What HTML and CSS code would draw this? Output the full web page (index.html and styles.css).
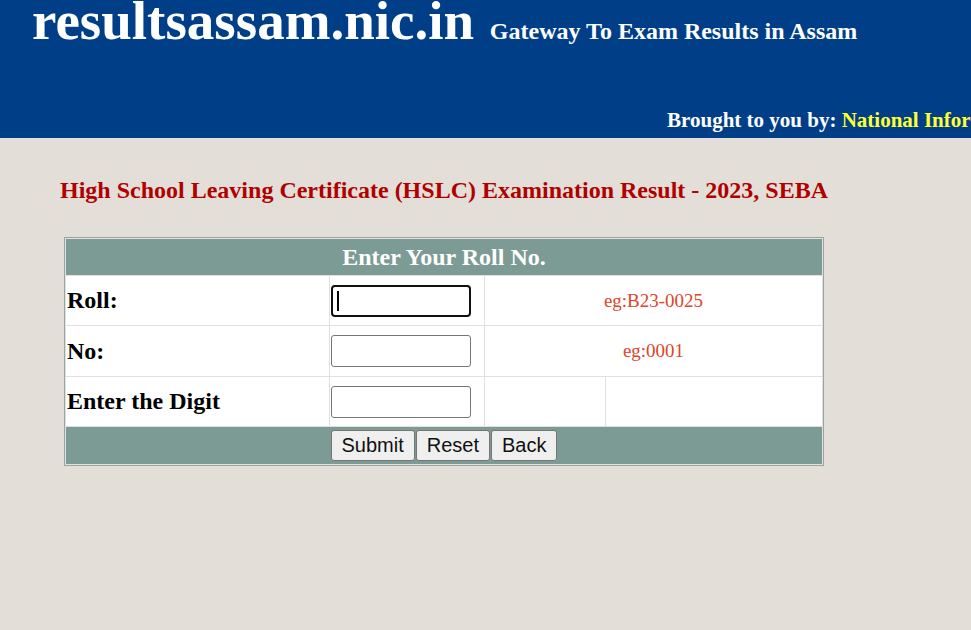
FILE: index.html
```html
<!DOCTYPE html>
<html lang="en">
<head>
<meta charset="utf-8">
<title>resultsassam.nic.in</title>
<link rel="stylesheet" href="styles.css">
</head>
<body>
<header class="site-header">
  <div class="brand-line"><span class="brand">resultsassam.nic.in </span><span class="tagline">Gateway To Exam Results in Assam</span></div>
  <div class="credit-line">Brought to you by: <span class="credit-org">National Informatics Centre, Assam</span></div>
</header>
<main class="content">
  <h2 class="exam-title">High School Leaving Certificate (HSLC) Examination Result - 2023, SEBA</h2>
  <form class="roll-form">
    <table class="form-table">
      <colgroup>
        <col class="col-label">
        <col class="col-input">
        <col class="col-captcha">
        <col class="col-blank">
      </colgroup>
      <tr class="head-row">
        <th colspan="4" class="head-cell">Enter Your Roll No.</th>
      </tr>
      <tr class="row-a">
        <td class="label-cell">Roll:</td>
        <td class="input-cell"><span class="field-wrap"><input type="text" class="text-field focused" name="roll"><span class="caret"></span></span></td>
        <td colspan="2" class="hint-cell">eg:B23-0025</td>
      </tr>
      <tr class="row-b">
        <td class="label-cell">No:</td>
        <td class="input-cell"><input type="text" class="text-field" name="no"></td>
        <td colspan="2" class="hint-cell">eg:0001</td>
      </tr>
      <tr class="row-c">
        <td class="label-cell">Enter the Digit</td>
        <td class="input-cell"><input type="text" class="text-field" name="digit"></td>
        <td class="captcha-cell"></td>
        <td class="blank-cell"></td>
      </tr>
      <tr class="foot-row">
        <td colspan="4" class="foot-cell">
          <div class="button-bar">
            <button type="button" class="btn">Submit</button>
            <button type="reset" class="btn">Reset</button>
            <button type="button" class="btn">Back</button>
          </div>
        </td>
      </tr>
    </table>
  </form>
</main>
</body>
</html>
```

FILE: styles.css
```css
html, body {
  margin: 0;
  padding: 0;
}
body {
  background: #e3dfd8;
  font-family: "Liberation Serif", "Times New Roman", serif;
  color: #000;
  width: 971px;
  height: 630px;
  overflow: hidden;
}
.site-header {
  background: #003f87;
  height: 138px;
  box-sizing: border-box;
  padding-bottom: 6px;
  display: flex;
  flex-direction: column;
  justify-content: space-between;
  color: #fff;
  font-weight: bold;
}
.brand-line {
  padding-left: 32px;
  line-height: 41px;
  white-space: nowrap;
}
.brand {
  font-size: 55px;
  margin-right: 2px;
}
.tagline {
  font-size: 24px;
}
.credit-line {
  font-size: 21px;
  line-height: 24px;
  white-space: nowrap;
  overflow: hidden;
  padding-left: 667px;
}
.credit-org {
  color: #ffff33;
}
.content {
  padding-top: 38px;
}
.exam-title {
  margin: 0 0 33px 60px;
  font-size: 24px;
  line-height: 28px;
  color: #b00000;
  font-weight: bold;
}
.roll-form {
  margin: 0 0 0 64px;
}
.form-table {
  width: 760px;
  border: 1px solid #9aa5a2;
  border-spacing: 1px;
  background: #e0e0e0;
  table-layout: fixed;
}
.col-label { width: 263px; }
.col-input { width: 154px; }
.col-captcha { width: 120px; }
.col-blank { width: 216px; }
.form-table td, .form-table th {
  padding: 1px;
  background: #fff;
}
.head-row .head-cell {
  background: #7b9b94;
  color: #fff;
  font-size: 24px;
  font-weight: bold;
  height: 34px;
  text-align: center;
}
.label-cell {
  font-size: 24px;
  font-weight: bold;
  text-align: left;
}
.row-a td { height: 47px; }
.row-b td { height: 48px; }
.row-c td { height: 47px; }
.hint-cell {
  text-align: center;
  color: #e0442a;
  font-size: 19px;
}
.field-wrap {
  position: relative;
  display: inline-block;
  vertical-align: middle;
}
.text-field {
  display: block;
  box-sizing: border-box;
  width: 140px;
  height: 32px;
  margin: 0;
  border: 1px solid #767676;
  border-radius: 3px;
  background: #fff;
  padding: 0 4px;
  font-family: "Liberation Sans", Arial, sans-serif;
  font-size: 18px;
}
.text-field.focused {
  border: 2px solid #101010;
  border-radius: 4px;
  outline: none;
}
.caret {
  position: absolute;
  left: 6px;
  top: 6px;
  width: 2px;
  height: 20px;
  background: #000;
}
.foot-row .foot-cell {
  background: #7b9b94;
  height: 37px;
  padding: 0;
}
.button-bar {
  display: flex;
  justify-content: center;
  gap: 1px;
}
.btn {
  height: 31px;
  margin: 0;
  padding: 0 10px;
  border: 1px solid #767676;
  border-radius: 3px;
  background: #efefef;
  color: #111;
  font-family: "Liberation Sans", Arial, sans-serif;
  font-size: 20px;
  line-height: 29px;
}
```
